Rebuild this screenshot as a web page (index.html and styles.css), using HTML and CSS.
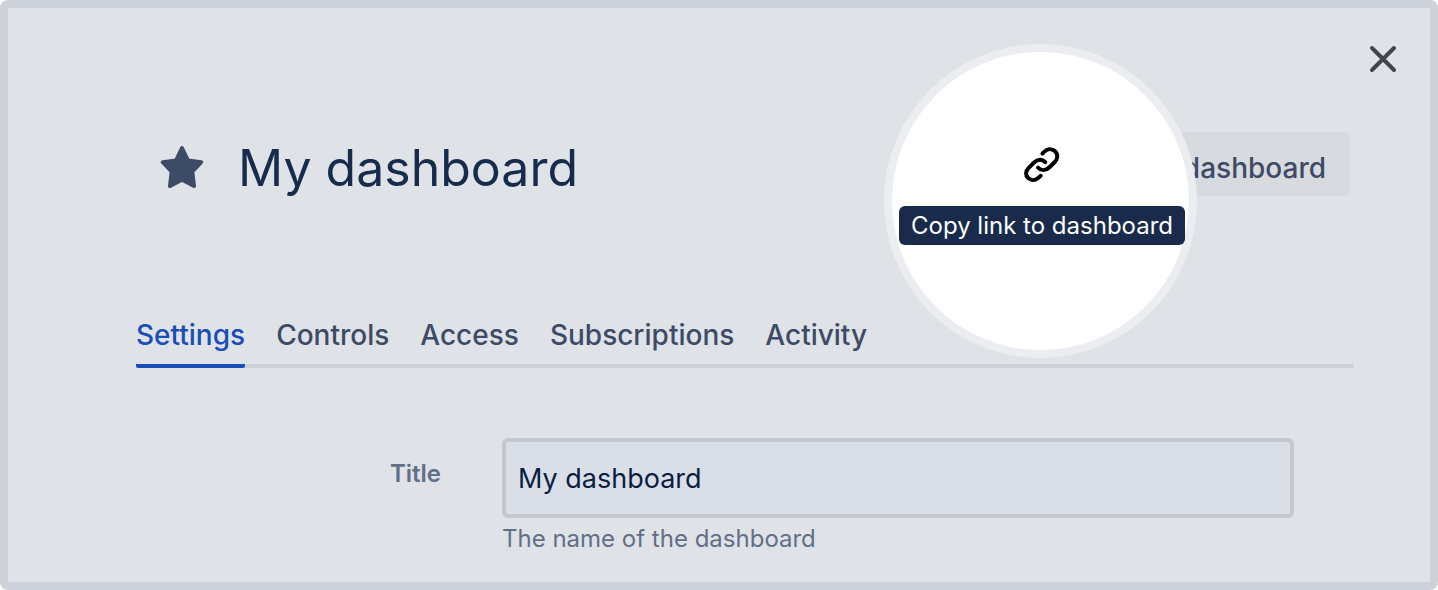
FILE: index.html
```html
<!DOCTYPE html>
<html lang="en">
<head>
<meta charset="utf-8">
<meta name="viewport" content="width=device-width, initial-scale=1">
<title>My dashboard</title>
<link rel="stylesheet" href="styles.css">
</head>
<body>
<main class="dialog">
  <div class="topbar">
    <button class="close" type="button" aria-label="Close">
      <svg width="28" height="28" viewBox="0 0 28 28" aria-hidden="true"><path d="M3 3 L25 25 M25 3 L3 25" fill="none" stroke="#42464c" stroke-width="4" stroke-linecap="round"/></svg>
    </button>
  </div>
  <div class="content">
    <header class="header">
      <button class="star" type="button" aria-label="Favourite">
        <svg width="44" height="44" viewBox="0 0 44 44" aria-hidden="true"><path d="M22 3 L28 15.6 L41.2 17.2 L32.3 26.5 L34 41 L22 34.8 L10 41 L11.7 26.5 L2.8 17.2 L16 15.6 Z" fill="#3d4b66" stroke="#3d4b66" stroke-width="4" stroke-linejoin="round"/></svg>
      </button>
      <h1 class="heading">My dashboard</h1>
      <div class="actions">
        <button class="action" type="button">dashboard</button>
        <div class="spotlight">
          <button class="copy" type="button" aria-describedby="copy-tip" aria-label="Copy link">
            <svg width="40" height="40" viewBox="0 0 40 40" aria-hidden="true"><g fill="none" stroke="#000" stroke-width="4" stroke-linecap="round" stroke-linejoin="round"><path d="M20.4 9.6 L22.1 7.9 C25.2 4.9 29.8 4.3 33 7.3 C36.3 10.5 35.8 15 32.8 18 L27.2 23.5 C23.5 27 19.1 26.8 16 23.7"/><path d="M23.3 18.1 C20.2 14.9 15.8 15 12.1 18.5 L6.9 23.7 C3.3 27.3 3.3 31.5 6.2 34.1 C9.2 36.8 13.4 36.5 16.5 33.7 L18.7 31.8"/></g></svg>
          </button>
          <span class="tooltip" role="tooltip" id="copy-tip">Copy link to dashboard</span>
        </div>
      </div>
    </header>
    <nav class="tabs">
      <a class="tab tab-active" href="#settings" aria-current="page">Settings</a>
      <a class="tab" href="#controls">Controls</a>
      <a class="tab" href="#access">Access</a>
      <a class="tab" href="#subscriptions">Subscriptions</a>
      <a class="tab" href="#activity">Activity</a>
    </nav>
    <form class="form">
      <label class="label" for="title">Title</label>
      <div class="field">
        <input class="input" id="title" type="text" value="My dashboard" aria-describedby="title-help">
        <p class="help" id="title-help">The name of the dashboard</p>
      </div>
    </form>
  </div>
</main>
</body>
</html>
```
FILE: styles.css
```css
* {
  box-sizing: border-box;
}

body {
  margin: 0;
  background: #fff;
  font-family: Inter, "Liberation Sans", sans-serif;
}

button {
  border: 0;
  background: none;
  font: inherit;
}

.dialog {
  min-height: 100vh;
  border: 8px solid #cdd1da;
  border-radius: 8px;
  background: linear-gradient(#dfe2e7, #dfe2e7) padding-box, #cdd1da;
}

.topbar {
  display: flex;
  justify-content: flex-end;
  padding: 31px 27px 0;
}

.close {
  display: flex;
  align-items: center;
  justify-content: center;
  width: 40px;
  height: 40px;
  padding: 0;
}

.content {
  padding: 53px 76px 24px 128px;
}

.header {
  display: flex;
  align-items: center;
  padding: 0 4px 0 24px;
}

.star {
  display: flex;
  padding: 6px 0 0;
}

.heading {
  margin: 0 0 0 34px;
  padding-top: 8px;
  color: #172b4d;
  font-size: 50px;
  font-weight: 400;
  line-height: 56px;
}

.actions {
  position: relative;
  margin-left: auto;
}

.action {
  display: block;
  width: 240px;
  height: 64px;
  padding: 8px 24px 0;
  border-radius: 6px;
  background: #d7dadf;
  color: #3d4b66;
  font-size: 28px;
  font-weight: 500;
  text-align: right;
}

.spotlight {
  position: absolute;
  top: -88px;
  right: 153px;
  display: flex;
  flex-direction: column;
  align-items: center;
  width: 313px;
  height: 314px;
  padding: 92px 0 0 3px;
  border: 8px solid #ebedf1;
  border-radius: 50%;
  background: #fff;
}

.copy {
  display: flex;
  padding: 0;
}

.tooltip {
  margin-top: 22px;
  padding: 0 12px;
  border-radius: 6px;
  background: #1a2a4b;
  color: #fff;
  font-size: 24px;
  line-height: 39px;
  white-space: nowrap;
}

.tabs {
  display: flex;
  gap: 31px;
  margin-top: 119px;
  border-radius: 2px;
  box-shadow: inset 0 -4px #cdd1da;
}

.tab {
  padding-bottom: 9px;
  border-bottom: 4px solid transparent;
  color: #3d4b66;
  font-size: 28px;
  font-weight: 500;
  line-height: 40px;
  text-decoration: none;
}

.tab-active {
  border-bottom-color: #1a4db5;
  border-radius: 2px;
  color: #1a4db5;
}

.form {
  display: grid;
  grid-template-columns: 305px 1fr;
  column-gap: 61px;
  margin-top: 70px;
  padding-right: 60px;
}

.label {
  padding-top: 20px;
  color: #626f88;
  font-size: 24px;
  font-weight: 600;
  line-height: 32px;
  text-align: right;
}

.input {
  display: block;
  width: 100%;
  height: 80px;
  padding: 0 12px;
  border: 4px solid #c3c7d0;
  border-radius: 6px;
  background: #dadee7;
  color: #091e42;
  font: inherit;
  font-size: 27px;
}

.help {
  margin: 5px 0 0;
  color: #626f88;
  font-size: 24px;
  line-height: 32px;
}
```
